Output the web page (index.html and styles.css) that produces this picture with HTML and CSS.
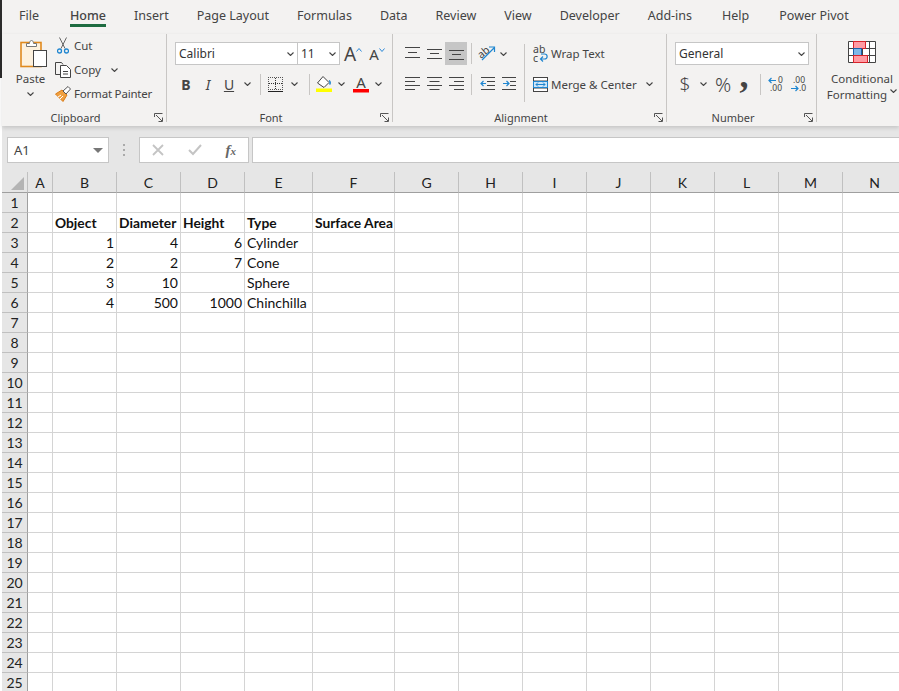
FILE: index.html
```html
<!DOCTYPE html>
<html lang="en">
  <head>
    <meta charset="UTF-8" />
    <meta name="viewport" content="width=device-width, initial-scale=1.0" />
    <title>Book1 - Excel</title>
    <link rel="stylesheet" href="styles.css">
  </head>
  <body>
    <svg class="sprite" width="0" height="0">
      <symbol id="chev" viewBox="0 0 7 4"><path d="M.5.5l3 3 3-3" fill="none" stroke="#444" stroke-width="1.1"/></symbol>
      <symbol id="launcher" viewBox="0 0 9 9"><path d="M.5 4V.5h8M8.5 8.5H4.500M8.500 8.500V4.500M2 2l6 6" fill="none" stroke="#555" stroke-width="1"/></symbol>
    </svg>
    <div class="window-edge"></div>

    <nav class="tabs">
      <span class="tab">File</span>
      <span class="tab active">Home</span>
      <span class="tab">Insert</span>
      <span class="tab">Page Layout</span>
      <span class="tab">Formulas</span>
      <span class="tab">Data</span>
      <span class="tab">Review</span>
      <span class="tab">View</span>
      <span class="tab">Developer</span>
      <span class="tab">Add-ins</span>
      <span class="tab help-tab">Help</span>
      <span class="tab pivot-tab">Power Pivot</span>
    </nav>

    <div class="ribbon">
      <section class="group clipboard">
        <div class="group-body clip-body">
          <div class="paste">
            <svg class="paste-icon" width="27" height="30" viewBox="0 0 27 30">
              <rect x="1" y="4.500" width="20" height="24" fill="#fdf1de" stroke="#e08a1e" stroke-width="1.600"/>
              <path d="M6.500 8.500v-3h3c0-4 4-4 4 0h3v3z" fill="#fff" stroke="#777"/>
              <rect x="13.500" y="12.500" width="13" height="16" fill="#fff" stroke="#444"/>
            </svg>
            <span class="paste-label">Paste</span>
            <svg class="chev"><use href="#chev"/></svg>
          </div>
          <div class="clip-actions">
            <div class="clip-row">
              <span class="clip-icon">
                <svg width="12" height="17" viewBox="0 0 12 17">
                  <path d="M2.500 .5l5.500 11M9.500 .5L4 11.500" fill="none" stroke="#666" stroke-width="1"/>
                  <circle cx="2.500" cy="14" r="2" fill="none" stroke="#1f86d0" stroke-width="1.300"/>
                  <circle cx="9.500" cy="14" r="2" fill="none" stroke="#1f86d0" stroke-width="1.300"/>
                </svg>
              </span>
              Cut
            </div>
            <div class="clip-row">
              <span class="clip-icon">
                <svg width="16" height="16" viewBox="0 0 16 16">
                  <path d="M5 12.500H.5V.5h6l1.500 2" fill="none" stroke="#444"/>
                  <path d="M5.500 3.500h6l4 4v8h-10z" fill="#fff" stroke="#444"/>
                  <path d="M8 9.500h5M8 12h5" stroke="#444"/>
                </svg>
              </span>
              Copy
              <svg class="chev copy-chev"><use href="#chev"/></svg>
            </div>
            <div class="clip-row painter">
              <span class="clip-icon">
                <svg width="16" height="16" viewBox="0 0 16 16">
                  <path d="M.5 8L7 4l5 5-4 6.500z" fill="#f0a040" stroke="#d97b16"/>
                  <path d="M3 11l3-2M5 13l3-3" stroke="#fff"/>
                  <path d="M8 5l5-4.500 2.500 2.500-4.500 5z" fill="#fff" stroke="#555"/>
                </svg>
              </span>
              Format Painter
            </div>
          </div>
        </div>
        <div class="group-label">Clipboard<svg class="launcher"><use href="#launcher"/></svg></div>
      </section>

      <section class="group font">
        <div class="group-body">
          <div class="row top-row">
            <div class="combo font-name">Calibri<svg class="chev"><use href="#chev"/></svg></div>
            <div class="combo font-size">11<svg class="chev"><use href="#chev"/></svg></div>
            <span class="grow-font">A<svg width="6" height="4" viewBox="0 0 6 4"><path d="M.5 3.500l2.500-3 2.500 3" fill="none" stroke="#2b88d8"/></svg></span>
            <span class="shrink-font">A<svg width="6" height="4" viewBox="0 0 6 4"><path d="M.5.5l2.500 3 2.500-3" fill="none" stroke="#2b88d8"/></svg></span>
          </div>
          <div class="row bottom-row">
            <span class="btn w22 bold">B</span>
            <span class="btn w22 italic">I</span>
            <span class="btn w20 under">U</span>
            <span class="btn w16"><svg class="chev"><use href="#chev"/></svg></span>
            <span class="sep"></span>
            <span class="btn w17">
              <svg class="borders-icon" width="15" height="15" viewBox="0 0 15 15">
                <path d="M.5 0v13M14.500 0v13M0 .5h15M0 12.500h15" fill="none" stroke="#555" stroke-dasharray="1 1"/>
                <path d="M7.500 1v11M1 6.500h13" fill="none" stroke="#333" stroke-dasharray="1 1"/>
                <path d="M0 14.500h15" stroke="#222"/>
              </svg>
            </span>
            <span class="btn w20"><svg class="chev"><use href="#chev"/></svg></span>
            <span class="sep"></span>
            <span class="btn w16">
              <svg width="16" height="16" viewBox="0 0 16 16">
                <path d="M1.500 7L7 .5l6 6L8 11.500z" fill="#fff" stroke="#444"/>
                <path d="M13.500 8.500c1-1 1-3-.5-4" fill="none" stroke="#1f86d0" stroke-width="1.500"/>
                <rect y="12.500" width="16" height="3.500" fill="#ffff00"/>
              </svg>
            </span>
            <span class="btn w18"><svg class="chev"><use href="#chev"/></svg></span>
            <span class="btn w16 font-color">
              <svg width="16" height="17" viewBox="0 0 16 17">
                <text x="8" y="12" text-anchor="middle" class="icon-text">A</text>
                <rect y="13" width="16" height="3.500" fill="#f00"/>
              </svg>
            </span>
            <span class="btn w18"><svg class="chev"><use href="#chev"/></svg></span>
          </div>
        </div>
        <div class="group-label">Font<svg class="launcher"><use href="#launcher"/></svg></div>
      </section>

      <section class="group alignment">
        <div class="group-body align-body">
          <div class="align-icons">
            <div class="row top-row">
              <span class="btn w22">
                <svg width="15" height="13" viewBox="0 0 15 13"><path d="M0 .5h15M3 5.500h9M0 10.500h15" stroke="#444"/></svg>
              </span>
              <span class="btn w22">
                <svg width="15" height="13" viewBox="0 0 15 13"><path d="M0 2.500h15M3 6.500h9M0 11.500h15" stroke="#444"/></svg>
              </span>
              <span class="btn w22 selected">
                <svg width="15" height="13" viewBox="0 0 15 13"><path d="M0 3.500h15M3 7.500h9M0 12.500h15" stroke="#444"/></svg>
              </span>
              <span class="sep align-sep"></span>
              <span class="btn w18">
                <svg width="17" height="17" viewBox="0 0 17 17">
                  <text x="-1" y="10" transform="rotate(-40 6 8)" class="icon-text small">ab</text>
                  <path d="M3 15L15 3M10 2h5.500v5" fill="none" stroke="#1f86d0" stroke-width="1.200"/>
                </svg>
              </span>
              <span class="btn w14"><svg class="chev"><use href="#chev"/></svg></span>
            </div>
            <div class="row bottom-row">
              <span class="btn w22">
                <svg width="15" height="14" viewBox="0 0 15 14"><path d="M0 .5h15M0 4.500h10M0 8.500h15M0 12.500h10" stroke="#444"/></svg>
              </span>
              <span class="btn w22">
                <svg width="15" height="14" viewBox="0 0 15 14"><path d="M0 .5h15M2.500 4.500h10M0 8.500h15M2.500 12.500h10" stroke="#444"/></svg>
              </span>
              <span class="btn w22">
                <svg width="15" height="14" viewBox="0 0 15 14"><path d="M0 .5h15M5 4.500h10M0 8.500h15M5 12.500h10" stroke="#444"/></svg>
              </span>
              <span class="sep align-sep"></span>
              <span class="btn w18">
                <svg width="15" height="14" viewBox="0 0 15 14">
                  <path d="M1 .5h14M7 4.500h8M7 8.500h8M1 12.500h14" stroke="#444"/>
                  <path d="M6 6.500H1M3.500 4L1 6.500 3.500 9" fill="none" stroke="#1f86d0" stroke-width="1.200"/>
                </svg>
              </span>
              <span class="btn w26">
                <svg width="15" height="14" viewBox="0 0 15 14">
                  <path d="M0 .5h14M8 4.500h6M8 8.500h6M0 12.500h14" stroke="#444"/>
                  <path d="M1 6.500h6M4.500 4L7 6.500 4.500 9" fill="none" stroke="#1f86d0" stroke-width="1.200"/>
                </svg>
              </span>
            </div>
          </div>
          <span class="wrap-sep"></span>
          <div class="wrap-col">
            <div class="row top-row">
              <span class="wrap-icon">
                <svg width="15" height="18" viewBox="0 0 15 18">
                  <text x="0" y="8" class="icon-text small">ab</text>
                  <text x="0" y="17" class="icon-text small">c</text>
                  <path d="M8 14h3.500c3.500 0 3.500-5 0-5H8M10 11.500L7.500 14l2.500 2.500" fill="none" stroke="#1f86d0" stroke-width="1.200"/>
                </svg>
              </span>
              Wrap Text
            </div>
            <div class="row bottom-row">
              <span class="wrap-icon">
                <svg width="15" height="15" viewBox="0 0 15 15">
                  <rect x=".5" y=".5" width="14" height="14" fill="#fff" stroke="#444"/>
                  <path d="M.5 4h14M.5 11h14" stroke="#444"/>
                  <rect x=".5" y="4.500" width="14" height="6" fill="#cfe6f8" stroke="#1f86d0"/>
                  <path d="M3 7.500h9M5 5.500l-2 2 2 2M10 5.500l2 2-2 2" fill="none" stroke="#1f86d0"/>
                </svg>
              </span>
              Merge &amp; Center
              <svg class="chev merge-chev"><use href="#chev"/></svg>
            </div>
          </div>
        </div>
        <div class="group-label">Alignment<svg class="launcher"><use href="#launcher"/></svg></div>
      </section>

      <section class="group number">
        <div class="group-body">
          <div class="row top-row">
            <div class="combo format-name">General<svg class="chev"><use href="#chev"/></svg></div>
          </div>
          <div class="row bottom-row">
            <span class="btn w20 dollar">$</span>
            <span class="btn w16"><svg class="chev"><use href="#chev"/></svg></span>
            <span class="btn w24 percent">%</span>
            <span class="btn w18 comma">,</span>
            <span class="sep number-sep"></span>
            <span class="btn w22">
              <svg width="16" height="16" viewBox="0 0 16 16">
                <path d="M8 4.500H1M3.500 2L1 4.500 3.500 7" fill="none" stroke="#1f86d0" stroke-width="1.200"/>
                <text x="10" y="7" class="icon-text tiny">0</text>
                <text x="2" y="15" class="icon-text tiny">.00</text>
              </svg>
            </span>
            <span class="btn w22">
              <svg width="16" height="16" viewBox="0 0 16 16">
                <text x="3" y="7" class="icon-text tiny">.00</text>
                <path d="M1 12.500h7M5.500 10L8 12.500 5.500 15" fill="none" stroke="#1f86d0" stroke-width="1.200"/>
                <text x="9" y="15" class="icon-text tiny">.0</text>
              </svg>
            </span>
          </div>
        </div>
        <div class="group-label">Number<svg class="launcher"><use href="#launcher"/></svg></div>
      </section>

      <section class="cond-format">
        <svg width="28" height="22" viewBox="0 0 28 22">
          <path d="M.5.500h27v21H.5zM.5 7.500h27M.5 14.500h27M5.500.500v21M14.500.500v21M21.500.500v21" fill="#fff" stroke="#444"/>
          <rect x="5.500" y=".5" width="12" height="7" fill="#ff9ba3" stroke="#d8232a"/>
          <rect x="5.500" y="7.500" width="8" height="7" fill="#7db8e8" stroke="#1a5fa8"/>
          <rect x="5.500" y="14.500" width="14" height="7" fill="#ff9ba3" stroke="#d8232a"/>
        </svg>
        <span class="cond-label">Conditional</span>
        <span class="cond-label">Formatting<svg class="chev cond-chev"><use href="#chev"/></svg></span>
      </section>
    </div>

    <div class="formula-bar">
      <div class="name-box">A1<span class="name-arrow"></span></div>
      <span class="bar-grip"></span>
      <div class="fx-box">
        <svg width="12" height="12" viewBox="0 0 12 12"><path d="M1 1l10 10M11 1L1 11" stroke="#c4c4c4" stroke-width="1.800"/></svg>
        <svg width="14" height="12" viewBox="0 0 14 12"><path d="M1 6l4 4 8-9" fill="none" stroke="#c4c4c4" stroke-width="2"/></svg>
        <span class="fx-label">f<small>x</small></span>
      </div>
      <div class="formula-input"></div>
    </div>

    <div class="sheet">
      <table class="grid">
        <colgroup>
          <col class="c-head"><col class="c-a"><col class="c-std"><col class="c-std"><col class="c-std"><col class="c-e"><col class="c-f">
          <col class="c-std"><col class="c-std"><col class="c-std"><col class="c-std"><col class="c-std"><col class="c-std"><col class="c-std"><col class="c-std">
        </colgroup>
        <thead>
          <tr>
            <th class="corner"><span class="corner-mark"></span></th>
            <th>A</th><th>B</th><th>C</th><th>D</th><th>E</th><th>F</th><th>G</th><th>H</th><th>I</th><th>J</th><th>K</th><th>L</th><th>M</th><th>N</th>
          </tr>
        </thead>
        <tbody>
          <tr><th>1</th><td></td><td></td><td></td><td></td><td></td><td></td><td></td><td></td><td></td><td></td><td></td><td></td><td></td><td></td></tr>
          <tr><th>2</th><td></td><td class="title">Object</td><td class="title">Diameter</td><td class="title">Height</td><td class="title">Type</td><td class="title">Surface Area</td><td></td><td></td><td></td><td></td><td></td><td></td><td></td><td></td></tr>
          <tr><th>3</th><td></td><td class="num">1</td><td class="num">4</td><td class="num">6</td><td>Cylinder</td><td></td><td></td><td></td><td></td><td></td><td></td><td></td><td></td><td></td></tr>
          <tr><th>4</th><td></td><td class="num">2</td><td class="num">2</td><td class="num">7</td><td>Cone</td><td></td><td></td><td></td><td></td><td></td><td></td><td></td><td></td><td></td></tr>
          <tr><th>5</th><td></td><td class="num">3</td><td class="num">10</td><td></td><td>Sphere</td><td></td><td></td><td></td><td></td><td></td><td></td><td></td><td></td><td></td></tr>
          <tr><th>6</th><td></td><td class="num">4</td><td class="num">500</td><td class="num">1000</td><td>Chinchilla</td><td></td><td></td><td></td><td></td><td></td><td></td><td></td><td></td><td></td></tr>
          <tr><th>7</th><td></td><td></td><td></td><td></td><td></td><td></td><td></td><td></td><td></td><td></td><td></td><td></td><td></td><td></td></tr>
          <tr><th>8</th><td></td><td></td><td></td><td></td><td></td><td></td><td></td><td></td><td></td><td></td><td></td><td></td><td></td><td></td></tr>
          <tr><th>9</th><td></td><td></td><td></td><td></td><td></td><td></td><td></td><td></td><td></td><td></td><td></td><td></td><td></td><td></td></tr>
          <tr><th>10</th><td></td><td></td><td></td><td></td><td></td><td></td><td></td><td></td><td></td><td></td><td></td><td></td><td></td><td></td></tr>
          <tr><th>11</th><td></td><td></td><td></td><td></td><td></td><td></td><td></td><td></td><td></td><td></td><td></td><td></td><td></td><td></td></tr>
          <tr><th>12</th><td></td><td></td><td></td><td></td><td></td><td></td><td></td><td></td><td></td><td></td><td></td><td></td><td></td><td></td></tr>
          <tr><th>13</th><td></td><td></td><td></td><td></td><td></td><td></td><td></td><td></td><td></td><td></td><td></td><td></td><td></td><td></td></tr>
          <tr><th>14</th><td></td><td></td><td></td><td></td><td></td><td></td><td></td><td></td><td></td><td></td><td></td><td></td><td></td><td></td></tr>
          <tr><th>15</th><td></td><td></td><td></td><td></td><td></td><td></td><td></td><td></td><td></td><td></td><td></td><td></td><td></td><td></td></tr>
          <tr><th>16</th><td></td><td></td><td></td><td></td><td></td><td></td><td></td><td></td><td></td><td></td><td></td><td></td><td></td><td></td></tr>
          <tr><th>17</th><td></td><td></td><td></td><td></td><td></td><td></td><td></td><td></td><td></td><td></td><td></td><td></td><td></td><td></td></tr>
          <tr><th>18</th><td></td><td></td><td></td><td></td><td></td><td></td><td></td><td></td><td></td><td></td><td></td><td></td><td></td><td></td></tr>
          <tr><th>19</th><td></td><td></td><td></td><td></td><td></td><td></td><td></td><td></td><td></td><td></td><td></td><td></td><td></td><td></td></tr>
          <tr><th>20</th><td></td><td></td><td></td><td></td><td></td><td></td><td></td><td></td><td></td><td></td><td></td><td></td><td></td><td></td></tr>
          <tr><th>21</th><td></td><td></td><td></td><td></td><td></td><td></td><td></td><td></td><td></td><td></td><td></td><td></td><td></td><td></td></tr>
          <tr><th>22</th><td></td><td></td><td></td><td></td><td></td><td></td><td></td><td></td><td></td><td></td><td></td><td></td><td></td><td></td></tr>
          <tr><th>23</th><td></td><td></td><td></td><td></td><td></td><td></td><td></td><td></td><td></td><td></td><td></td><td></td><td></td><td></td></tr>
          <tr><th>24</th><td></td><td></td><td></td><td></td><td></td><td></td><td></td><td></td><td></td><td></td><td></td><td></td><td></td><td></td></tr>
          <tr><th>25</th><td></td><td></td><td></td><td></td><td></td><td></td><td></td><td></td><td></td><td></td><td></td><td></td><td></td><td></td></tr>
        </tbody>
      </table>
    </div>
  </body>
</html>
```

FILE: styles.css
```css
* {
  margin: 0;
  padding: 0;
  box-sizing: border-box;
}
html,
body {
  height: 691px;
  overflow: hidden;
}
body {
  background: #fff;
  padding-left: 2px;
  font-family: "Noto Sans", sans-serif;
  font-size: 12px;
  color: #444;
}
.sprite {
  position: absolute;
}
.window-edge {
  position: absolute;
  left: 0;
  top: 0;
  width: 2px;
  height: 78px;
  background: #2b2b2b;
}

/* tabs */
.tabs {
  display: flex;
  height: 34px;
  padding-left: 3px;
  background: #f3f2f1;
}
.tab {
  padding: 7px 14px 0;
  line-height: 18px;
  font-size: 12.500px;
}
.tab:first-child {
  padding-right: 17px;
}
.tab.active {
  font-weight: 500;
}
.tab.active::after {
  content: "";
  display: block;
  height: 3px;
  margin-top: -1px;
  background: #1e6c41;
}
.help-tab {
  margin-left: 2px;
}
.pivot-tab {
  margin-left: 2px;
}

/* ribbon */
.ribbon {
  position: relative;
  z-index: 1;
  display: flex;
  height: 92px;
  background: #f3f2f1;
  box-shadow: 0 2px 4px rgba(0, 0, 0, 0.14);
}
.group {
  display: flex;
  flex-direction: column;
  height: 88px;
  border-right: 1px solid #c8c6c4;
}
.clipboard {
  width: 165px;
}
.font {
  width: 226px;
}
.alignment {
  width: 274px;
}
.number {
  width: 150px;
}
.group-body {
  height: 76px;
  padding-top: 8px;
  padding-left: 8px;
}
.group-label {
  position: relative;
  height: 12px;
  padding-right: 17px;
  line-height: 16px;
  text-align: center;
  font-size: 11px;
}
.launcher {
  position: absolute;
  right: 3px;
  bottom: 0;
  width: 9px;
  height: 9px;
}
.chev {
  display: block;
  width: 7px;
  height: 4px;
}
.row {
  display: flex;
  align-items: center;
}
.top-row {
  height: 23px;
}
.bottom-row {
  height: 22px;
  margin-top: 8px;
}
.btn {
  display: flex;
  align-items: center;
  justify-content: center;
  flex-shrink: 0;
}
.btn svg,
.wrap-icon svg {
  overflow: visible;
}
.borders-icon {
  shape-rendering: crispEdges;
}
.w14 { width: 14px; }
.w16 { width: 16px; }
.w17 { width: 17px; }
.w18 { width: 18px; }
.w20 { width: 20px; }
.w22 { width: 22px; }
.w24 { width: 24px; }
.w26 { width: 26px; }
.sep {
  flex-shrink: 0;
  width: 1px;
  height: 21px;
  margin: 0 6px 0 5px;
  background: #c8c6c4;
}
.icon-text {
  font-family: "Noto Sans", sans-serif;
  font-size: 15px;
  fill: #444;
}
.icon-text.small {
  font-size: 10.500px;
}
.icon-text.tiny {
  font-size: 8.500px;
}

/* clipboard */
.clip-body {
  display: flex;
  padding-top: 1px;
  padding-left: 0;
}
.paste {
  display: flex;
  flex-direction: column;
  align-items: center;
  width: 53px;
  padding-top: 3px;
  padding-left: 4px;
}
.paste-icon {
  margin-left: 6px;
}
.paste-label {
  margin-top: 2px;
  line-height: 18px;
  font-size: 11.500px;
}
.paste .chev {
  margin-top: 4px;
}
.clip-actions {
  display: flex;
  flex-direction: column;
  gap: 3px;
}
.clip-row {
  display: flex;
  align-items: center;
  height: 21px;
  white-space: nowrap;
  font-size: 11.500px;
}
.painter {
  letter-spacing: -0.2px;
}
.clip-icon {
  display: flex;
  justify-content: center;
  width: 16px;
  margin-right: 3px;
}
.copy-chev {
  margin-left: 10px;
}

/* font */
.combo {
  display: flex;
  align-items: center;
  justify-content: space-between;
  height: 23px;
  padding: 0 3px;
  background: #fff;
  border: 1px solid #c6c6c6;
  color: #333;
}
.font-name {
  width: 123px;
}
.font-size {
  width: 43px;
  margin-left: -1px;
}
.grow-font,
.shrink-font {
  display: flex;
  align-items: flex-start;
  line-height: 22px;
}
.grow-font svg,
.shrink-font svg {
  margin-top: 5px;
}
.grow-font {
  margin-left: 4px;
  font-size: 19px;
}
.shrink-font {
  margin-left: 7px;
  font-size: 15px;
}
.bold {
  font-weight: 700;
  font-size: 14px;
}
.italic {
  font-style: italic;
  font-size: 14px;
}
.under {
  text-decoration: underline;
  font-size: 14px;
}
.font-color {
  margin-left: 3px;
}

/* alignment */
.align-body {
  display: flex;
  padding-left: 1px;
}
.align-icons {
  width: 130px;
  flex-shrink: 0;
  padding-left: 7px;
}
.align-icons .btn.selected {
  height: 23px;
  background: #c6c6c6;
}
.align-sep {
  margin: 0 6px 0 4px;
}
.wrap-sep {
  width: 1px;
  height: 58px;
  margin-top: 2px;
  background: #c8c6c4;
}
.wrap-col {
  padding-left: 8px;
  white-space: nowrap;
  font-size: 11.500px;
}
.wrap-icon {
  display: flex;
  justify-content: center;
  width: 15px;
  margin-right: 3px;
}
.merge-chev {
  margin-left: 9px;
}

/* number */
.format-name {
  width: 134px;
}
.dollar {
  font-size: 19px;
  font-weight: 300;
}
.percent {
  font-size: 20px;
  font-weight: 300;
}
.comma {
  height: 22px;
  padding-bottom: 18px;
  font-family: "Liberation Serif", serif;
  font-size: 36px;
  font-weight: 700;
  line-height: 14px;
}
.number-sep {
  margin: 0 4px 0 7px;
}

/* conditional formatting */
.cond-format {
  flex: 1;
  display: flex;
  flex-direction: column;
  align-items: center;
  padding-top: 7px;
  padding-left: 8px;
  font-size: 11.500px;
}
.cond-format svg:first-child {
  margin-bottom: 8px;
}
.cond-label {
  display: flex;
  align-items: center;
  line-height: 16px;
}
.cond-chev {
  margin-left: 3px;
}

/* formula bar */
.formula-bar {
  display: flex;
  height: 46px;
  padding: 11px 0 9px 5px;
  background: #e6e6e6;
}
.name-box,
.fx-box,
.formula-input {
  height: 26px;
  background: #fff;
  border: 1px solid #c6c6c6;
}
.name-box {
  display: flex;
  align-items: center;
  justify-content: space-between;
  width: 102px;
  padding: 0 5px 0 6px;
  font-size: 13px;
}
.name-arrow {
  border-left: 5px solid transparent;
  border-right: 5px solid transparent;
  border-top: 5px solid #777;
}
.bar-grip {
  width: 2px;
  height: 12px;
  margin: 7px 14px 0;
  background-image: linear-gradient(#aaa 2px, transparent 2px);
  background-size: 2px 5px;
}
.fx-box {
  display: flex;
  align-items: center;
  justify-content: space-between;
  width: 110px;
  padding: 0 12px;
}
.fx-label {
  font-family: "Liberation Serif", serif;
  font-style: italic;
  font-size: 15px;
  font-weight: 700;
  color: #666;
}
.fx-label small {
  font-size: 11px;
}
.formula-input {
  flex: 1;
  margin-left: 3px;
  border-right: 0;
}

/* sheet */
.sheet {
  overflow: hidden;
}
.grid {
  table-layout: fixed;
  width: 905px;
  border-collapse: separate;
  border-spacing: 0;
  font-family: Lato, sans-serif;
  font-size: 14px;
  color: #111;
}
.c-head { width: 26px; }
.c-a { width: 25px; }
.c-std { width: 64px; }
.c-e { width: 68px; }
.c-f { width: 82px; }
.grid th {
  font-weight: 400;
  background: #e6e6e6;
  border-right: 1px solid #c0c0c0;
  border-bottom: 1px solid #c0c0c0;
  color: #222;
}
.grid thead th {
  height: 21px;
  border-bottom-color: #9f9f9f;
}
.grid tbody th {
  border-right-color: #9f9f9f;
}
.grid td {
  height: 20px;
  padding: 0 2px;
  overflow: hidden;
  white-space: nowrap;
  border-right: 1px solid #d4d4d4;
  border-bottom: 1px solid #d4d4d4;
}
.grid td.title {
  font-weight: 700;
  font-size: 13.800px;
}
.grid td.num {
  text-align: right;
}
.corner {
  position: relative;
}
.corner-mark {
  position: absolute;
  right: 3px;
  bottom: 2px;
  border-left: 13px solid transparent;
  border-bottom: 13px solid #b4b4b4;
}
```
